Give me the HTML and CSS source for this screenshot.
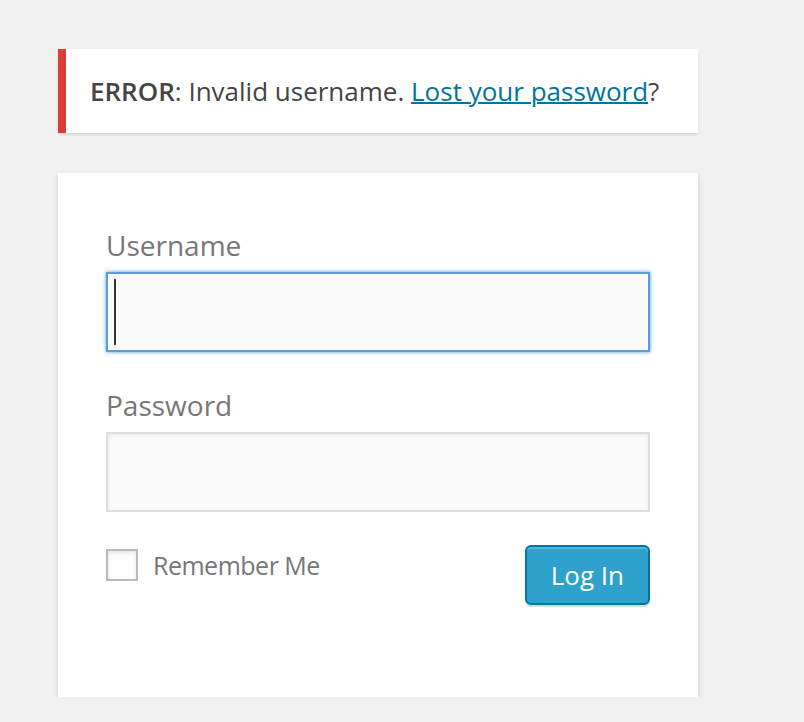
FILE: index.html
```html
<!DOCTYPE html>
<html lang="en">
<head>
  <meta charset="UTF-8" />
  <title>Log In</title>
  <link rel="stylesheet" href="styles.css">
</head>
<body>
  <div class="login">
    <div class="message error">
      <strong>ERROR</strong>: Invalid username. <a href="#">Lost your password</a>?
    </div>

    <form class="loginform">
      <div class="field">
        <label for="user_login">Username</label>
        <div class="input-wrap">
          <input type="text" id="user_login" class="input focused">
          <span class="caret"></span>
        </div>
      </div>

      <div class="field">
        <label for="user_pass">Password</label>
        <div class="input-wrap">
          <input type="password" id="user_pass" class="input">
        </div>
      </div>

      <div class="actions">
        <label class="forgetmenot">
          <input type="checkbox" class="checkbox"> Remember Me
        </label>
        <button type="button" class="button-primary">Log In</button>
      </div>
    </form>
  </div>
</body>
</html>
```

FILE: styles.css
```css
* {
  box-sizing: border-box;
}

body {
  margin: 0;
  background: #f1f1f1;
  font-family: "Open Sans", "Liberation Sans", sans-serif;
  color: #444;
}

.login {
  width: 640px;
  margin-left: 58px;
  padding-top: 49px;
}

.message {
  background: #fff;
  border-left: 8px solid #dd3d36;
  padding: 24px;
  margin-bottom: 40px;
  font-size: 26px;
  line-height: 36px;
  color: #444;
  box-shadow: 0 2px 2px 0 rgba(0, 0, 0, 0.1);
}

.message strong {
  font-weight: 600;
}

.message a {
  color: #0074a2;
  text-decoration: underline;
  text-decoration-thickness: 2px;
}

.loginform {
  background: #fff;
  padding: 52px 48px 92px;
  box-shadow: 0 2px 6px rgba(0, 0, 0, 0.13);
}

.field {
  margin-bottom: 33px;
}

.field label {
  display: block;
  font-size: 28px;
  line-height: 40px;
  color: #777;
  margin-bottom: 7px;
}

.input-wrap {
  position: relative;
}

.input {
  display: block;
  width: 100%;
  height: 80px;
  margin: 0;
  padding: 6px;
  font-family: inherit;
  font-size: 48px;
  background: #fbfbfb;
  border: 2px solid #ddd;
  box-shadow: inset 0 2px 4px rgba(0, 0, 0, 0.07);
  outline: none;
}

.input.focused {
  border-color: #5b9dd9;
  box-shadow: 0 0 4px rgba(30, 140, 190, 0.8);
}

.caret {
  position: absolute;
  left: 8px;
  top: 7px;
  width: 2px;
  height: 66px;
  background: #333;
}

.actions {
  display: flex;
  justify-content: space-between;
  align-items: flex-start;
}

.forgetmenot {
  display: flex;
  align-items: center;
  gap: 15px;
  height: 40px;
  font-size: 25px;
  letter-spacing: -0.5px;
  line-height: 40px;
  color: #777;
}

.checkbox {
  appearance: none;
  -webkit-appearance: none;
  width: 32px;
  height: 32px;
  margin: 0;
  background: #fefefe;
  border: 2px solid #bbb;
  box-shadow: inset 0 2px 4px rgba(0, 0, 0, 0.1);
}

.button-primary {
  height: 60px;
  padding: 0 24px;
  font-family: inherit;
  font-size: 26px;
  line-height: 56px;
  color: #fff;
  background: #2ea2cc;
  border: 2px solid #0074a2;
  border-radius: 6px;
  box-shadow: inset 0 2px 0 rgba(120, 200, 230, 0.5), 0 2px 0 rgba(0, 0, 0, 0.15);
  cursor: pointer;
}
```
